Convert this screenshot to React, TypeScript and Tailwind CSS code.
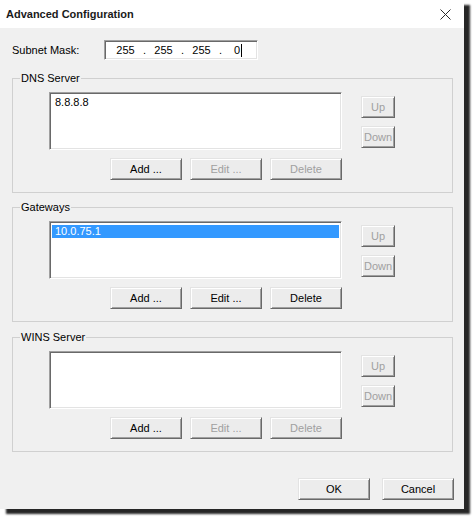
import React from "react";

const raised =
  "border border-t-[#e3e3e3] border-l-[#e3e3e3] border-r-[#696969] border-b-[#696969] shadow-[inset_1px_1px_0_#ffffff,inset_-1px_-1px_0_#a0a0a0] bg-[#ececec]";
const sunken =
  "border border-t-[#a0a0a0] border-l-[#a0a0a0] border-r-white border-b-white shadow-[inset_1px_1px_0_#696969,inset_-1px_-1px_0_#e3e3e3] bg-white";

function Btn({ label, disabled, w = "w-[72px]" }: { label: string; disabled?: boolean; w?: string }) {
  return (
    <div
      className={`${raised} ${w} flex h-[22px] items-center justify-center text-[11px] ${
        disabled ? "text-[#a0a0a0]" : "text-black"
      }`}
    >
      {label}
    </div>
  );
}

function Group({
  title,
  items,
  selected,
  editable,
  className,
}: {
  title: string;
  items: string[];
  selected?: number;
  editable?: boolean;
  className?: string;
}) {
  return (
    <fieldset className={`ml-[12px] w-[441px] border border-[#d0d0d0] ${className ?? ""}`}>
      <legend className="ml-[7px] px-[1px] text-[11px] leading-[14px] text-black">{title}</legend>
      <div className="flex pb-[12px] pl-[36px] pt-[7px]">
        <div className="flex w-[293px] flex-col">
          <div className={`${sunken} h-[58px] px-[2px] pt-[3px]`}>
            {items.map((it, i) => (
              <div
                key={it}
                className={`h-[13px] pl-[3px] text-[11px] leading-[13px] ${
                  selected === i ? "bg-[#3399ff] text-white" : "text-black"
                }`}
              >
                {it}
              </div>
            ))}
          </div>
          <div className="mt-[8px] flex justify-end gap-[8px]">
            <Btn label="Add ..." />
            <Btn label="Edit ..." disabled={!editable} />
            <Btn label="Delete" disabled={!editable} />
          </div>
        </div>
        <div className="ml-[19px] mt-[4px] flex flex-col gap-[8px]">
          <Btn label="Up" disabled w="w-[34px]" />
          <Btn label="Down" disabled w="w-[34px]" />
        </div>
      </div>
    </fieldset>
  );
}

export default function App() {
  return (
    <div className="h-[521px] w-[474px] overflow-hidden bg-white font-['Liberation_Sans',Arial,sans-serif]">
      <div className="flex h-[509px] w-[464px] flex-col bg-[#f0f0f0] shadow-[6px_5px_2px_rgba(0,0,0,0.85)]">
        <div className="flex h-[28px] items-center justify-between bg-white pl-[6px] pr-[13px]">
          <span className="text-[11px] font-bold text-[#1a1a1a]">Advanced Configuration</span>
          <svg width="11" height="11" viewBox="0 0 11 11">
            <path d="M0.5 0.5 L10.5 10.5 M10.5 0.5 L0.5 10.5" stroke="#2b2b2b" strokeWidth="1" />
          </svg>
        </div>

        <div className="mt-[12px] flex items-center pl-[12px]">
          <span className="w-[92px] text-[11px] text-black">Subnet Mask:</span>
          <div className={`${sunken} flex h-[20px] w-[154px] items-center pl-[4px] text-[11px] text-black`}>
            <span className="w-[33px] text-center">255</span>
            <span className="w-[5px] text-center">.</span>
            <span className="w-[33px] text-center">255</span>
            <span className="w-[5px] text-center">.</span>
            <span className="w-[33px] text-center">255</span>
            <span className="w-[5px] text-center">.</span>
            <span className="flex w-[30px] items-center justify-center">
              0<span className="ml-[1px] inline-block h-[13px] w-[1px] bg-black" />
            </span>
          </div>
        </div>

        <Group title="DNS Server" items={["8.8.8.8"]} className="mt-[11px]" />
        <Group title="Gateways" items={["10.0.75.1"]} selected={0} editable className="mt-[7px]" />
        <Group title="WINS Server" items={[]} className="mt-[8px]" />

        <div className="mt-[26px] flex justify-end gap-[12px] pr-[10px]">
          <Btn label="OK" />
          <Btn label="Cancel" />
        </div>
      </div>
    </div>
  );
}
